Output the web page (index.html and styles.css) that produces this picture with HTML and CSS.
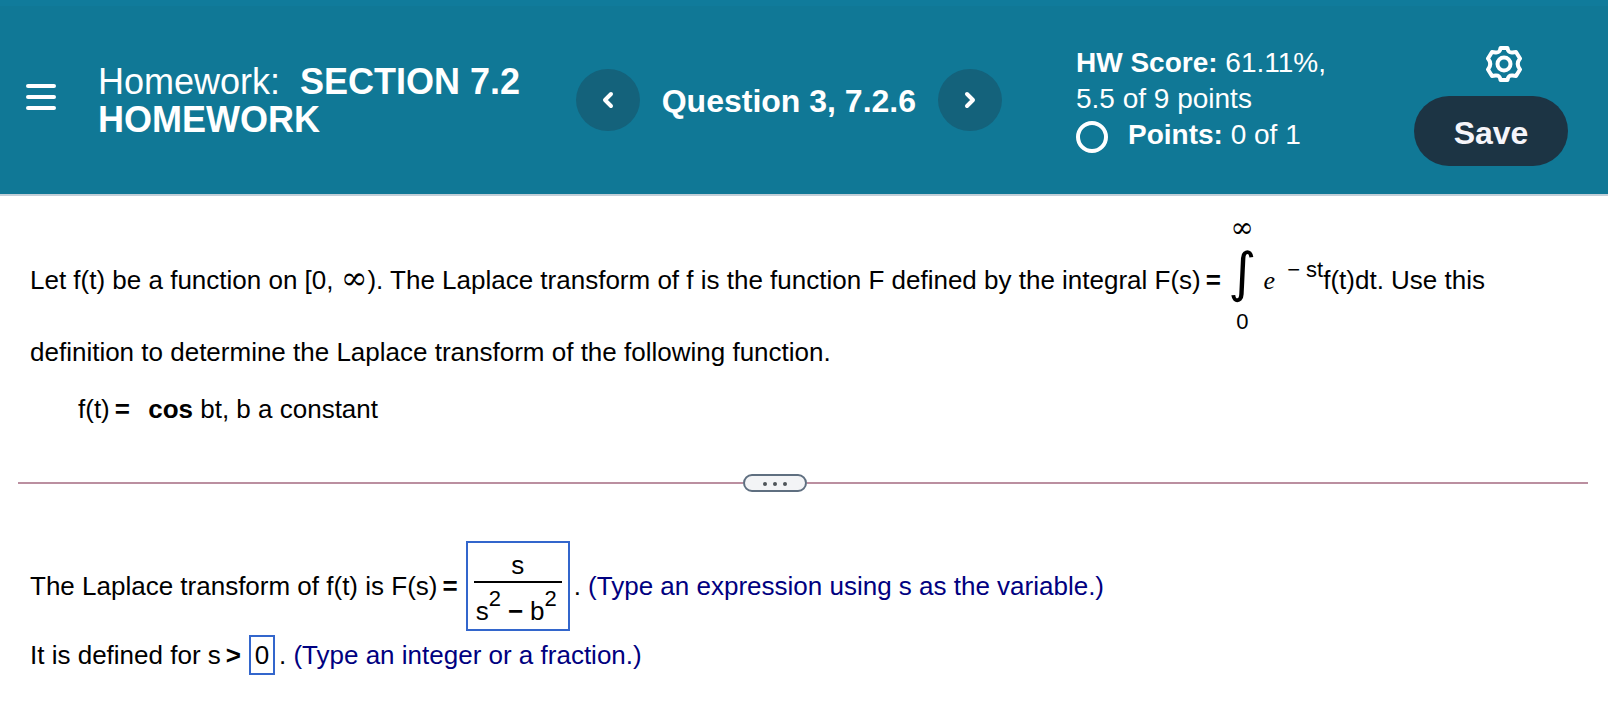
FILE: index.html
```html
<!DOCTYPE html>
<html lang="en">
<head>
    <meta charset="UTF-8">
    <meta name="viewport" content="width=device-width, initial-scale=1.0">
    <title>Homework: Section 7.2</title>
    <link rel="stylesheet" href="styles.css">
</head>
<body>
    <!-- Assignment header -->
    <header class="header">
        <button class="menu-btn" type="button" aria-label="Menu">
            <span></span>
            <span></span>
            <span></span>
        </button>

        <h1 class="title">Homework:&nbsp; <strong>SECTION 7.2 HOMEWORK</strong></h1>

        <nav class="question-nav">
            <button class="nav-btn" type="button" aria-label="Previous question">
                <svg width="12" height="18" viewBox="0 0 12 18"><path d="M9 3 3 9l6 6"/></svg>
            </button>
            <h2>Question 3, 7.2.6</h2>
            <button class="nav-btn" type="button" aria-label="Next question">
                <svg width="12" height="18" viewBox="0 0 12 18"><path d="m3 3 6 6-6 6"/></svg>
            </button>
        </nav>

        <div class="score">
            <p><strong>HW Score:</strong> 61.11%, 5.5 of 9 points</p>
            <p class="points"><span class="circle"></span><span><strong>Points:</strong> 0 of 1</span></p>
        </div>

        <div class="actions">
            <button class="settings-btn" type="button" aria-label="Settings">
                <svg width="36" height="36" viewBox="0 0 36 36">
                    <path d="M14.500 2H21.500Q22 7 26.500 6.500L30 6L34 12.500Q29.500 18 34 23.500L30 30L26.500 29.500Q22 29 21.500 34H14.500Q14 29 9.500 29.500L6 30L2 23.500Q6.500 18 2 12.500L6 6L9.500 6.500Q14 7 14.500 2Z"/>
                    <circle cx="18" cy="18" r="6.500"/>
                </svg>
            </button>
            <button class="save-btn" type="button">Save</button>
        </div>
    </header>

    <main class="content">
        <!-- Problem statement -->
        <section class="problem">
            <p class="statement">Let f(t) be a function on [0, <span class="inf">∞</span>). The Laplace transform of f is the function F defined by the integral F(s)<span class="op">=</span>
                <span class="integral"><span class="upper">∞</span><span class="sign">∫</span><span class="lower">0</span></span>
                <i class="euler">e</i><sup class="exponent">− st</sup>f(t)dt. Use this definition to determine the Laplace transform of the following function.</p>
            <p class="function">f(t)<span class="op">=</span> <b>cos</b> bt, b a constant</p>
        </section>

        <div class="divider">
            <button class="handle" type="button" aria-label="Resize">
                <span></span><span></span><span></span>
            </button>
        </div>

        <!-- Answer area -->
        <section class="answer">
            <div class="row">
                <span id="transform">The Laplace transform of f(t) is F(s)<span class="op">=</span></span>
                <div class="math-box" role="textbox" tabindex="0" aria-labelledby="transform">
                    <span class="numerator">s</span>
                    <span class="denominator">s<sup>2</sup><span class="minus">−</span>b<sup>2</sup></span>
                </div>
                <span>. <span class="hint">(Type an expression using s as the variable.)</span></span>
            </div>
            <div class="row">
                <label for="bound">It is defined for s<span class="op">&gt;</span></label>
                <input class="number-box" id="bound" type="text" value="0">
                <span>. <span class="hint">(Type an integer or a fraction.)</span></span>
            </div>
        </section>
    </main>
</body>
</html>
```
FILE: styles.css
```css
* {
    margin: 0;
    padding: 0;
    box-sizing: border-box;
}

body {
    font-family: "Liberation Sans", Arial, sans-serif;
    font-size: 26px;
    color: #000;
    background: #fff;
}

button {
    border: none;
    background: none;
    font-family: inherit;
    color: inherit;
    cursor: pointer;
}

svg {
    display: block;
    fill: none;
    stroke: #fff;
    stroke-linecap: round;
    stroke-linejoin: round;
}

/* Header */
.header {
    display: flex;
    align-items: center;
    height: 196px;
    padding: 0 40px 0 26px;
    color: #fff;
    background: #107896;
    border-top: 6px solid #107b9b;
    border-bottom: 2px solid #c3cfd8;
}

.menu-btn {
    display: flex;
    flex-direction: column;
    gap: 7px;
    width: 30px;
    margin-right: 42px;
    padding-bottom: 6px;
}

.menu-btn span {
    height: 4px;
    border-radius: 2px;
    background: #fff;
}

.title {
    flex: 1;
    padding-top: 2px;
    font-size: 36px;
    font-weight: 400;
    line-height: 38px;
}

.question-nav {
    display: flex;
    align-items: center;
    gap: 22px;
}

.question-nav h2 {
    padding-top: 2px;
    font-size: 32px;
    line-height: 36px;
    white-space: nowrap;
}

.nav-btn {
    display: flex;
    align-items: center;
    justify-content: center;
    width: 64px;
    height: 62px;
    border-radius: 50%;
    background: #14627b;
}

.nav-btn svg {
    stroke-width: 4;
}

.score {
    width: 264px;
    margin: 0 74px;
    padding-bottom: 2px;
    font-size: 28px;
    line-height: 36px;
}

.points {
    display: flex;
    gap: 20px;
}

.circle {
    width: 32px;
    height: 32px;
    margin-top: 4px;
    border: 4px solid #fff;
    border-radius: 50%;
}

.actions {
    display: flex;
    flex-direction: column;
    gap: 14px;
    padding-top: 12px;
}

.settings-btn {
    align-self: flex-end;
    margin-right: 46px;
}

.settings-btn svg {
    stroke-width: 4;
}

.save-btn {
    width: 154px;
    height: 70px;
    padding-top: 4px;
    border-radius: 35px;
    font-size: 32px;
    font-weight: 700;
    color: #f5f5fa;
    background: #1c3444;
}

/* Problem */
.content {
    padding: 18px 20px 0 18px;
}

.problem {
    padding: 0 0 47px 12px;
    line-height: 36px;
}

.op {
    margin-left: 5px;
    font-weight: 700;
}

.inf {
    font-family: "DejaVu Serif", serif;
    font-size: 32px;
    line-height: 1;
}

.integral {
    display: inline-flex;
    flex-direction: column;
    align-items: center;
    vertical-align: 52px;
}

.upper {
    font-family: "DejaVu Serif", serif;
    font-size: 28px;
    line-height: 28px;
}

.sign {
    margin-bottom: 6px;
    font-family: "DejaVu Sans", sans-serif;
    font-size: 54px;
    line-height: 62px;
}

.lower {
    font-size: 22px;
    line-height: 24px;
}

.euler {
    font-family: "Liberation Serif", serif;
    margin-right: 12px;
}

.exponent {
    font-size: 22px;
    line-height: 1;
    vertical-align: 12px;
}

.function {
    margin-top: 21px;
    padding-left: 48px;
}

.function b {
    margin-left: 11px;
}

/* Divider with drag handle */
.divider {
    display: flex;
    align-items: center;
    justify-content: center;
}

.divider::before,
.divider::after {
    content: "";
    flex: 13;
    height: 2px;
    background: #bb8fa0;
}

.divider::after {
    flex: 14;
}

.handle {
    display: flex;
    align-items: center;
    justify-content: center;
    gap: 6px;
    width: 64px;
    height: 18px;
    padding-top: 2px;
    border: 2px solid #5f6f80;
    border-radius: 9px;
    background: #f3f4f6;
}

.handle span {
    width: 4px;
    height: 4px;
    border-radius: 50%;
    background: #4f5459;
}

/* Answer */
.answer {
    padding: 49px 0 0 12px;
}

.row {
    display: flex;
    align-items: center;
    gap: 4px;
    margin-bottom: 4px;
}

.hint {
    color: #000080;
}

.math-box {
    display: flex;
    flex-direction: column;
    width: 104px;
    height: 90px;
    margin-left: 4px;
    padding: 6px;
    border: 2px solid #36c;
}

.numerator {
    height: 34px;
    line-height: 32px;
    text-align: center;
    border-bottom: 2px solid #000;
}

.denominator {
    padding: 6px 2px 0;
    line-height: 36px;
    white-space: nowrap;
}

.denominator sup {
    font-size: 22px;
    line-height: 20px;
    vertical-align: 14px;
}

.minus {
    margin: 0 7px;
    font-weight: 700;
}

.number-box {
    width: 26px;
    height: 40px;
    margin-left: 4px;
    border: 2px solid #36c;
    font: inherit;
    text-align: center;
}
```
